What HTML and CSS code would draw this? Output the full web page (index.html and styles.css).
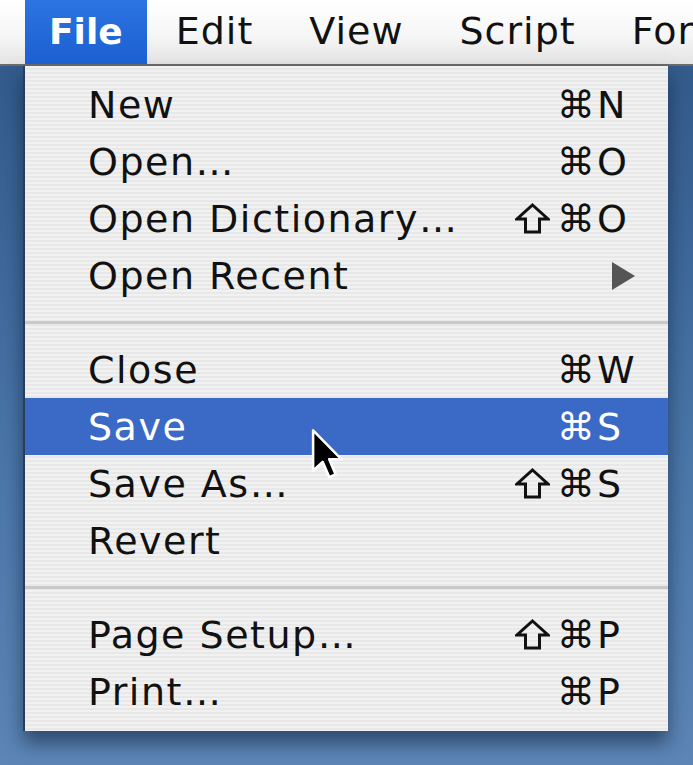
FILE: index.html
```html
<!DOCTYPE html>
<html lang="en">
<head>
  <meta charset="UTF-8" />
  <title>File menu</title>
  <link rel="stylesheet" href="styles.css">
</head>
<body>
  <div class="menubar">
    <span class="bar-item active">File</span>
    <span class="bar-item">Edit</span>
    <span class="bar-item">View</span>
    <span class="bar-item">Script</span>
    <span class="bar-item">For</span>
  </div>

  <div class="menu">
    <div class="row"><span class="label">New</span><span class="mods">⌘</span><span class="key">N</span></div>
    <div class="row"><span class="label">Open…</span><span class="mods">⌘</span><span class="key">O</span></div>
    <div class="row">
      <span class="label">Open Dictionary…</span>
      <span class="mods"><svg class="shift" viewBox="0 0 35 31"><path d="M17.5 2 L33 16 L24.5 16 L24.5 29 L10.5 29 L10.5 16 L2 16 Z" fill="none" stroke="currentColor" stroke-width="3" stroke-linejoin="miter"/></svg>⌘</span>
      <span class="key">O</span>
    </div>
    <div class="row"><span class="label">Open Recent</span><span class="mods"></span><span class="key"><span class="arrow"></span></span></div>
    <div class="sep"></div>
    <div class="row"><span class="label">Close</span><span class="mods">⌘</span><span class="key">W</span></div>
    <div class="row selected"><span class="label">Save</span><span class="mods">⌘</span><span class="key">S</span></div>
    <div class="row">
      <span class="label">Save As…</span>
      <span class="mods"><svg class="shift" viewBox="0 0 35 31"><path d="M17.5 2 L33 16 L24.5 16 L24.5 29 L10.5 29 L10.5 16 L2 16 Z" fill="none" stroke="currentColor" stroke-width="3" stroke-linejoin="miter"/></svg>⌘</span>
      <span class="key">S</span>
    </div>
    <div class="row"><span class="label">Revert</span><span class="mods"></span><span class="key"></span></div>
    <div class="sep"></div>
    <div class="row">
      <span class="label">Page Setup…</span>
      <span class="mods"><svg class="shift" viewBox="0 0 35 31"><path d="M17.5 2 L33 16 L24.5 16 L24.5 29 L10.5 29 L10.5 16 L2 16 Z" fill="none" stroke="currentColor" stroke-width="3" stroke-linejoin="miter"/></svg>⌘</span>
      <span class="key">P</span>
    </div>
    <div class="row"><span class="label">Print…</span><span class="mods">⌘</span><span class="key">P</span></div>
  </div>

  <svg class="cursor" width="36" height="60" viewBox="0 0 17 28">
    <path d="M1 1 L1 20 L5.5 15.8 L8.6 23 L11.6 21.7 L8.6 14.6 L14.4 14.6 Z" fill="#000" stroke="#fff" stroke-width="1.2" stroke-linejoin="round"/>
  </svg>
</body>
</html>
```

FILE: styles.css
```css
* {
  margin: 0;
  padding: 0;
  box-sizing: border-box;
}
body {
  width: 693px;
  height: 765px;
  overflow: hidden;
  position: relative;
  font-family: "DejaVu Sans", "Liberation Sans", sans-serif;
  background: linear-gradient(180deg, #2f5686 0%, #4a76a8 60%, #5d86b6 100%);
}

/* top bar */
.menubar {
  height: 66px;
  display: flex;
  align-items: stretch;
  padding-left: 25px;
  background: linear-gradient(180deg, #ffffff 0%, #f6f6f6 55%, #e4e4e4 100%);
  border-bottom: 2px solid #6b6b6b;
  white-space: nowrap;
  overflow: hidden;
}
.bar-item {
  display: flex;
  align-items: center;
  padding: 0 28px 2px;
  font-size: 38px;
  letter-spacing: 1px;
  color: #111;
}
.bar-item.active {
  padding: 0 24px 2px;
  background: linear-gradient(180deg, #2c74e0 0%, #1c5fd2 100%);
  color: #fff;
  font-weight: bold;
  font-size: 36px;
  letter-spacing: 0;
}
.bar-item.active + .bar-item {
  padding-left: 29px;
}

/* dropdown */
.menu {
  width: 645px;
  margin-left: 23px;
  padding: 10px 0 11px;
  background-color: #ededed;
  background-image: repeating-linear-gradient(180deg, #f1f1f1 0, #f1f1f1 2px, #e8e8e8 2px, #e8e8e8 4px);
  border-left: 2px solid #2a3d58;
  box-shadow: 0 12px 18px rgba(10, 25, 50, 0.55);
}
.row {
  height: 57px;
  display: grid;
  grid-template-columns: 1fr auto 44px;
  align-items: center;
  padding: 0 27px 0 63px;
  font-size: 38px;
  letter-spacing: 1.5px;
  color: #111;
  white-space: nowrap;
}
.row.selected {
  background: #3a69c6;
  color: #fff;
}
.mods {
  display: flex;
  align-items: center;
  justify-content: flex-end;
  letter-spacing: 0;
  padding-right: 2px;
}
.shift {
  width: 35px;
  height: 31px;
  margin-right: 7px;
}
.key {
  position: relative;
}
.arrow {
  display: block;
  width: 0;
  height: 0;
  margin-left: 15px;
  border-top: 14px solid transparent;
  border-bottom: 14px solid transparent;
  border-left: 23px solid #555;
}
.sep {
  height: 37px;
  display: flex;
  align-items: center;
}
.sep::before {
  content: "";
  display: block;
  width: 100%;
  height: 3px;
  background: #c9c9c9;
}

.cursor {
  position: absolute;
  left: 311px;
  top: 428px;
}
```
